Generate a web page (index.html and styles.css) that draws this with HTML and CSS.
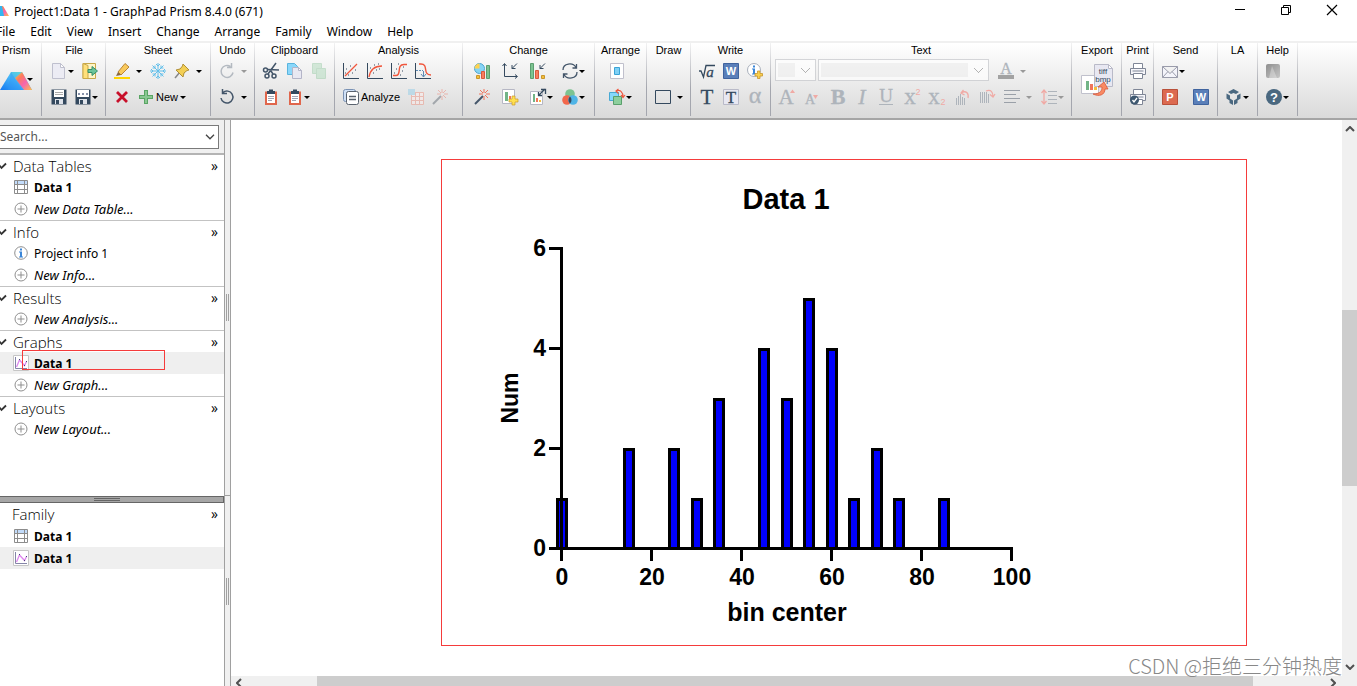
FILE: index.html
```html
<!DOCTYPE html>
<html lang="en">
<head>
  <meta charset="UTF-8">
  <meta name="viewport" content="width=device-width, initial-scale=1.0">
  <title>Project1:Data 1 - GraphPad Prism 8.4.0 (671)</title>
  <link rel="stylesheet" href="styles.css">
</head>
<body>
  <!-- Shared icons -->
  <svg class="sprite" aria-hidden="true">
    <defs>
      <linearGradient id="gradBlue" x1="0" y1="1" x2="1" y2="0">
        <stop offset="0" stop-color="#1479f0"/><stop offset=".5" stop-color="#45b4f8"/><stop offset="1" stop-color="#6be8c8"/>
      </linearGradient>
      <linearGradient id="gradWarm" x1="0" y1="0" x2="1" y2="1">
        <stop offset="0" stop-color="#c8e070"/><stop offset=".3" stop-color="#ff7a5a"/><stop offset=".6" stop-color="#f565b0"/><stop offset="1" stop-color="#ffc04a"/>
      </linearGradient>
      <linearGradient id="gradGray" x1="0" y1="0" x2="1" y2="1">
        <stop offset="0" stop-color="#8e8e8e"/><stop offset="1" stop-color="#c6c6c6"/>
      </linearGradient>
    </defs>
    <symbol id="logo" viewBox="0 0 32 20">
      <path d="M11 1h11l10 18H0z" fill="url(#gradBlue)"/>
      <path d="M11 1l11 18H8z" fill="#2f95f5" opacity=".4"/>
      <path d="M22 1l10 18H24L15 7z" fill="url(#gradWarm)"/>
    </symbol>
    <symbol id="table" viewBox="0 0 14 14">
      <path d="M.5.5h13v13H.5z" fill="#fff"/><path d="M1 1h12v3H1z" fill="#c3dcfb"/>
      <path d="M.5.5h13v13H.5zM.5 4.500h13M.5 9.500h13M3.500.5v13M10.500.5v13" fill="none" stroke="#8c8c8c"/>
    </symbol>
    <symbol id="plus" viewBox="0 0 14 14">
      <circle cx="7" cy="7" r="6" fill="#fff" stroke="#8f8f8f"/><path d="M3.500 7h7M7 3.500v7" stroke="#8f8f8f" fill="none"/>
    </symbol>
    <symbol id="info" viewBox="0 0 14 14">
      <circle cx="7" cy="7" r="6.300" fill="#fff" stroke="#8f8f8f"/><path d="M6 2.500h2v2H6zM5 5.500h3v5h1v1H5v-1h1v-4H5z" fill="#3b86d8"/>
    </symbol>
    <symbol id="graph" viewBox="0 0 16 16">
      <path d="M.5.5h15v15H.5z" fill="#fff" stroke="#c6c6c6"/><path d="M2.500 2v11.500H14" fill="none" stroke="#8585a8"/>
      <path d="M3.500 12L6.500 5l5 5.500 2-4" fill="none" stroke="#dd88ee" stroke-width="1.300"/><path d="M6 4h1v1H6zM11 10h1v1h-1zM13 6h1v1h-1z" fill="#447"/>
    </symbol>
    <symbol id="check" viewBox="0 0 8 8"><path d="M0 3l2.500 3L7 1.500" fill="none" stroke="#333" stroke-width="1.800"/></symbol>
    <symbol id="down" viewBox="0 0 10 6"><path d="M1 .8l4 4 4-4" fill="none" stroke="currentColor" stroke-width="1.300"/></symbol>
    <symbol id="axes" viewBox="0 0 16 16"><path d="M.5 0v15.500H16" fill="none" stroke="#34495e"/></symbol>
    <symbol id="clip" viewBox="0 0 16 16">
      <path d="M3 3.500h10V15H3z" fill="#fff" stroke="#e0664c" stroke-width="2"/><path d="M4 2h2V.5h4V2h2v3H4z" fill="#34495e"/><path d="M5 7.500h6M5 9.500h6M5 11.500h4" stroke="#a0a4b4"/>
    </symbol>
    <symbol id="printer" viewBox="0 0 16 16">
      <path d="M3.500 6V.5h9V6" fill="#fff" stroke="#7f8696"/><path d="M.5 5.500h15v6H.5z" fill="#f6f6fa" stroke="#7f8696"/><path d="M2.500 8h11" stroke="#7f8696"/><path d="M3.500 10.500h9v5h-9z" fill="#fff" stroke="#7f8696"/>
    </symbol>
  </svg>

  <header class="titlebar">
    <svg class="app-icon" viewBox="0 0 9 12"><path d="M-2 11L0 1h3l6 10z" fill="url(#gradWarm)"/><path d="M-3 11L0 1h2l2 10z" fill="#33b5f0"/></svg>
    <h1>Project1:Data 1 - GraphPad Prism 8.4.0 (671)</h1>
    <div class="window-buttons">
      <button type="button" aria-label="Minimize"><svg viewBox="0 0 12 12"><path d="M1 5.500h10" stroke="#000"/></svg></button>
      <button type="button" aria-label="Restore"><svg viewBox="0 0 12 12"><path d="M1.500 3.500h7v7h-7zM3.500 3.500v-2h7v7h-2" fill="none" stroke="#000"/></svg></button>
      <button type="button" aria-label="Close"><svg viewBox="0 0 12 12"><path d="M1 1l10 10M11 1L1 11" stroke="#000" stroke-width="1.200"/></svg></button>
    </div>
  </header>

  <nav class="menubar">
    <a href="#">File</a><a href="#">Edit</a><a href="#">View</a><a href="#">Insert</a><a href="#">Change</a><a href="#">Arrange</a><a href="#">Family</a><a href="#">Window</a><a href="#">Help</a>
  </nav>

  <div class="toolbar">
    <section class="group g-prism">
      <h2>Prism</h2>
      <button type="button" class="tool logo" aria-label="Prism"><svg><use href="#logo"/></svg><i class="caret"></i></button>
    </section>

    <section class="group g-file">
      <h2>File</h2>
      <div class="row spread">
        <button type="button" class="tool" aria-label="New file"><svg viewBox="0 0 16 16"><path d="M1.500.5h8l4 4v11h-12z" fill="#ececf4" stroke="#bfc0ce"/><path d="M9.500.5v4h4z" fill="#fff" stroke="#bfc0ce"/></svg><i class="caret"></i></button>
        <button type="button" class="tool" aria-label="Open"><svg viewBox="0 0 16 16"><path d="M1 .5h12.500v15H1z" fill="#fff5c6" stroke="#c8a84a"/><path d="M1 .5l5 2v13H1z" fill="#ffe07a" stroke="#c8a84a"/><path d="M6 6.500h4V3.500L15.500 8 10 12.500v-3H6z" fill="#6cc49a" stroke="#34916a"/></svg></button>
      </div>
      <div class="row spread">
        <button type="button" class="tool" aria-label="Save"><svg viewBox="0 0 16 16"><path d="M.5.5h15v15h-15z" fill="#34495e"/><path d="M3 1h10v7H3z" fill="#fff"/><path d="M4 3.500h8M4 5.500h8" stroke="#aaa"/><path d="M4 10h8v5H4z" fill="#dfe3ea"/><path d="M5 11h3v4H5z" fill="#34495e"/></svg></button>
        <button type="button" class="tool" aria-label="Save as"><svg viewBox="0 0 16 16"><path d="M.5.5h15v15h-15z" fill="#34495e"/><path d="M2 1h12v7H2z" fill="#fff"/><path d="M3 4h2v2H3zM7 4h2v2H7zM11 4h2v2h-2z" fill="#8892aa"/><path d="M4 10h8v5H4z" fill="#dfe3ea"/><path d="M5 11h3v4H5z" fill="#34495e"/></svg><i class="caret"></i></button>
      </div>
    </section>

    <section class="group g-sheet">
      <h2>Sheet</h2>
      <div class="row">
        <button type="button" class="tool wide" aria-label="Highlight"><svg viewBox="0 0 16 16"><path d="M0 14h16v2H0z" fill="#ffd400"/><path d="M4 9l7-8.500 4 3.500-8 8z" fill="#f9c95c" stroke="#b98636"/><path d="M4 9l3 3-5 1z" fill="#8a6a42"/></svg><i class="caret"></i></button>
        <button type="button" class="tool" aria-label="Freeze"><svg viewBox="0 0 16 16" fill="none" stroke="#62bfea"><path d="M8 0v16M0 8h16M2.500 2.500l11 11M13.500 2.500l-11 11M6 1l2 2 2-2M6 15l2-2 2 2M1 6l2 2-2 2M15 6l-2 2 2 2M2.500 5H5V2.500M13.500 5H11V2.500M2.500 11H5v2.500M13.500 11H11v2.500"/></svg></button>
        <button type="button" class="tool wide" aria-label="Pin"><svg viewBox="0 0 16 16"><path d="M1 15l5-6" stroke="#888" stroke-width="1.500"/><path d="M9 1l6 6-2 .5-3 2.500-1 4-7-7 4-1 2.500-3z" fill="#f3cf55" stroke="#b08f35"/></svg><i class="caret"></i></button>
      </div>
      <div class="row">
        <button type="button" class="tool" aria-label="Delete"><svg viewBox="0 0 16 16"><path d="M3 3l10 10M13 3L3 13" stroke="#c8102a" stroke-width="2.800"/></svg></button>
        <button type="button" class="tool caption"><svg viewBox="0 0 16 16"><path d="M8 1v14M1 8h14" stroke="#5aa564" stroke-width="4"/><path d="M8 2v12M2 8h12" stroke="#8ac792" stroke-width="2"/></svg>New<i class="caret"></i></button>
      </div>
    </section>

    <section class="group g-undo">
      <h2>Undo</h2>
      <div class="row"><button type="button" class="tool wide off" aria-label="Redo"><svg viewBox="0 0 16 16" fill="none" stroke="#b4bac1" stroke-width="1.500"><path d="M11.500 3.500a6 6 0 1 0 2.500 6M12.500 0v4.500H8"/></svg><i class="caret"></i></button></div>
      <div class="row"><button type="button" class="tool wide" aria-label="Undo"><svg viewBox="0 0 16 16" fill="none" stroke="#44566a" stroke-width="1.500"><path d="M4 3.500A6 6 0 1 1 2 9M3.500 0v4.500H8"/></svg><i class="caret"></i></button></div>
    </section>

    <section class="group g-clip">
      <h2>Clipboard</h2>
      <div class="row">
        <button type="button" class="tool" aria-label="Cut"><svg viewBox="0 0 16 16" fill="none" stroke="#44566a" stroke-width="1.500"><path d="M5 11L13 0M4.500 6.500L16 7M8 8l2 3"/><circle cx="2.500" cy="7" r="2"/><circle cx="4" cy="13" r="2"/><circle cx="11" cy="13" r="2"/></svg></button>
        <button type="button" class="tool" aria-label="Copy"><svg viewBox="0 0 16 16"><path d="M.5.5h7l3 3v8H.5z" fill="#8ad7fb" stroke="#5ab4dd"/><path d="M5.500 4.500h6l3 3v8h-9z" fill="#e8e8f2" stroke="#b4b5c8"/><path d="M11.500 4.500v3h3z" fill="#fff" stroke="#b4b5c8"/></svg></button>
        <button type="button" class="tool faded" aria-label="Duplicate"><svg viewBox="0 0 16 16" fill="#a9d8b6" stroke="#8cc49b"><path d="M1.500.5h9v10h-9z"/><path d="M5.500 5.500h9v10h-9z"/></svg></button>
      </div>
      <div class="row">
        <button type="button" class="tool" aria-label="Paste"><svg><use href="#clip"/></svg></button>
        <button type="button" class="tool" aria-label="Paste special"><svg><use href="#clip"/></svg><i class="caret"></i></button>
      </div>
    </section>

    <section class="group g-analysis">
      <h2>Analysis</h2>
      <div class="row">
        <button type="button" class="tool" aria-label="Linear fit"><svg viewBox="0 0 16 16"><use href="#axes"/><path d="M2 13L14 1" stroke="#f0563c" stroke-width="1.300"/><path d="M3 6h1M7 3h1M9 10h1M12 7h1M5 12h1M2 10h1" stroke="#34495e"/></svg></button>
        <button type="button" class="tool" aria-label="Curve fit"><svg viewBox="0 0 16 16"><use href="#axes"/><path d="M2 14C3 8 7 3 15 3" stroke="#f0563c" fill="none" stroke-width="1.300"/><path d="M3 5h1M7 2h1M11 1h1M9 7h1M12 6h1M6 10h1" stroke="#34495e"/></svg></button>
        <button type="button" class="tool" aria-label="Sigmoidal fit"><svg viewBox="0 0 16 16"><use href="#axes"/><path d="M2 12.500h3c6 0 0-11 8-11h3" stroke="#f0563c" fill="none" stroke-width="1.400"/><path d="M3 10h1M5 6h1M7 1h1M12 4h1M11 8h1M9 12h1" stroke="#34495e"/></svg></button>
        <button type="button" class="tool" aria-label="Interpolate"><svg viewBox="0 0 16 16"><use href="#axes"/><path d="M4 1h2c8 0 1 11 10 11" stroke="#f0563c" fill="none" stroke-width="1.400"/><path d="M1 7.500h7" stroke="#5e8bb5" stroke-dasharray="2 1"/><path d="M8.500 8v6M6 11l2.500 3 2.500-3" fill="none" stroke="#5e8bb5"/></svg></button>
      </div>
      <div class="row">
        <button type="button" class="tool caption"><svg viewBox="0 0 16 16"><rect x=".5" y=".5" width="12" height="12" rx="2" fill="#cfe0f6" stroke="#7a92b4"/><rect x="3.500" y="2.500" width="12" height="13" rx="2" fill="#fff" stroke="#59626e"/><path d="M6 7.500h7M6 10.500h7" stroke="#59626e" stroke-width="1.500"/></svg>Analyze</button>
        <button type="button" class="tool faded" aria-label="Table"><svg viewBox="0 0 16 16"><path d="M3.500 3.500h12v12h-12zM7.500 3.500v12M11.500 3.500v12M3.500 7.500h12M3.500 11.500h12" fill="#fff0ee" stroke="#ee8a78"/><path d="M0 0h7v6H0z" fill="#8bcbe8"/></svg></button>
        <button type="button" class="tool faded" aria-label="Wizard"><svg viewBox="0 0 16 16"><path d="M1 15L9 7" stroke="#555f6b" stroke-width="2"/><path d="M10 0v4M10 7v4M5 5h4M12 5h4M6 1l3 3M11 6l3 3M14 1l-3 3" stroke="#ee7a68"/></svg></button>
      </div>
    </section>

    <section class="group g-change">
      <h2>Change</h2>
      <div class="row">
        <button type="button" class="tool" aria-label="Graph type"><svg viewBox="0 0 16 16"><circle cx="5.500" cy="5.500" r="5" fill="#86d4f5" stroke="#4da6d0"/><path d="M5.500 5.500H.5a5 5 0 0 1 5-5z" fill="#ffd250"/><path d="M12.500 2.500h3v13h-3z" fill="#7cc391" stroke="#5c9e70"/><path d="M7.500 8.500h3v7h-3z" fill="#f77f60" stroke="#d8583c"/><path d="M2.500 12.500h3v3h-3z" fill="#f4bf3c" stroke="#c8962c"/></svg></button>
        <button type="button" class="tool" aria-label="Format axes"><svg viewBox="0 0 16 16" fill="none" stroke="#34495e"><path d="M2.500 1v12.500H15M.5 3l2-2.500 2 2.500M13 11.500l2.500 2-2.500 2M15 .5L10 5.500M10 2v3.500h3.500"/></svg></button>
        <button type="button" class="tool" aria-label="Format graph"><svg viewBox="0 0 16 16"><path d="M.5.5h3v15h-3z" fill="#7cc391" stroke="#5c9e70"/><path d="M5.500 7.500h3v8h-3z" fill="#f77f60" stroke="#d8583c"/><path d="M11.500 12.500h3v3h-3z" fill="#f4bf3c" stroke="#c8962c"/><path d="M15 .5l-5 5M10 2v3.500h3.500" fill="none" stroke="#34495e"/></svg></button>
        <button type="button" class="tool" aria-label="Swap"><svg viewBox="0 0 16 16" fill="none" stroke="#44566a" stroke-width="1.300"><path d="M1 7c0-7 10-8 13-2.500M14.500 1v4h-4M15 9c0 7-10 8-13 2.500M1.500 15v-4h4"/></svg><i class="caret"></i></button>
      </div>
      <div class="row">
        <button type="button" class="tool" aria-label="Magic"><svg viewBox="0 0 16 16"><path d="M1 15L9 7" stroke="#44566a" stroke-width="2"/><path d="M10 0v4M10 7v4M5 5h4M12 5h4M6 1l3 3M11 6l3 3M14 1l-3 3" stroke="#f0755c"/></svg></button>
        <button type="button" class="tool" aria-label="Add data set"><svg viewBox="0 0 16 16"><path d="M.5.5h12v14H.5z" fill="#fff" stroke="#b6b7c4"/><path d="M3 3h3v9H3z" fill="#72b487"/><path d="M7 7h2v5H7z" fill="#f0755c"/><path d="M10 7h3v3h3v3h-3v3h-3v-3H7v-3h3z" fill="#ffe04f" stroke="#c89a2c" stroke-width=".7"/></svg></button>
        <button type="button" class="tool" aria-label="Resize"><svg viewBox="0 0 16 16"><path d="M.5 2.500h12v13H.5z" fill="#fff" stroke="#b6b7c4"/><path d="M3 5h2v8H3z" fill="#72b487"/><path d="M6 9h2v4H6z" fill="#f0755c"/><path d="M9 11h2v2H9z" fill="#f4bf3c"/><path d="M9 6l6-6M11 .5h4.500V5M8.500 3v3.500H12" fill="none" stroke="#34495e" stroke-width="1.300"/></svg><i class="caret"></i></button>
        <button type="button" class="tool" aria-label="Colors"><svg viewBox="0 0 16 16"><circle cx="8" cy="5" r="4.800" fill="#7cc391"/><circle cx="5" cy="11" r="4.800" fill="#f2674b"/><circle cx="11" cy="11" r="4.800" fill="#4fb4e6"/><path d="M8 7.500a4.800 4.800 0 0 1 0 7 4.800 4.800 0 0 1 0-7z" fill="#34495e"/></svg><i class="caret"></i></button>
      </div>
    </section>

    <section class="group g-arrange">
      <h2>Arrange</h2>
      <div class="row"><button type="button" class="tool" aria-label="Center"><svg viewBox="0 0 16 16"><path d="M1.500.5h13v15h-13z" fill="#fff" stroke="#c0c0cc"/><path d="M5.500 4.500h5v7h-5z" fill="#7fd0f5" stroke="#3ba3d6"/></svg></button></div>
      <div class="row"><button type="button" class="tool" aria-label="Rotate"><svg viewBox="0 0 16 16"><path d="M.5 3.500h9v8h-9z" fill="#86d8fb" stroke="#48a9d4"/><path d="M4.500 7.500h8v8h-8z" fill="#8dcf9d" stroke="#5aa06c"/><path d="M7 2c4-2 7 1 7 6M9.500 0L7 2l2.500 2.500M12 6l2 2.500L16 6" fill="none" stroke="#f0553c" stroke-width="1.200"/></svg><i class="caret"></i></button></div>
    </section>

    <section class="group g-draw">
      <h2>Draw</h2>
      <div class="row"></div>
      <div class="row"><button type="button" class="tool wide" aria-label="Rectangle"><svg viewBox="0 0 16 16"><path d="M.5 1.500h15v13H.5z" fill="none" stroke="#34495e"/></svg><i class="caret"></i></button></div>
    </section>

    <section class="group g-write">
      <h2>Write</h2>
      <div class="row">
        <button type="button" class="tool" aria-label="Equation"><svg viewBox="0 0 16 16"><path d="M0 8h2l2.500 6L7 2.500h9" fill="none" stroke="#34495e" stroke-width="1.300"/><text x="11" y="14" class="t-dark" font-size="15" font-style="italic">a</text></svg></button>
        <button type="button" class="tool" aria-label="Word object"><svg viewBox="0 0 16 16"><path d="M.5.5h15v15H.5z" fill="#5a7fb9" stroke="#3f639e"/><text x="8" y="12" class="t-white" font-size="11">W</text></svg></button>
        <button type="button" class="tool" aria-label="Info"><svg viewBox="0 0 16 16"><circle cx="7" cy="7" r="6.500" fill="#fff" stroke="#a9b0bc"/><path d="M6 2.500h2v2H6zM5 5.500h3v5h1v1H5v-1h1v-4H5z" fill="#3b86d8"/><path d="M10.500 8h2.500v2.500h2.500V13H13v2.500h-2.500V13H8v-2.500h2.500z" fill="#f8cf4c" stroke="#c8962c" stroke-width=".8"/></svg></button>
      </div>
      <div class="row">
        <button type="button" class="tool" aria-label="Text"><svg viewBox="0 0 16 16"><text x="8" y="15" class="t-dark" font-size="21">T</text></svg></button>
        <button type="button" class="tool" aria-label="Text box"><svg viewBox="0 0 16 16"><path d="M.5.5h15v15H.5z" fill="#e8e8f2" stroke="#b9bac8"/><text x="8" y="14" class="t-dark" font-size="17">T</text></svg></button>
        <button type="button" class="tool" aria-label="Greek"><svg viewBox="0 0 16 16"><text x="8" y="14" class="t-gray" font-size="24">α</text></svg></button>
      </div>
    </section>

    <section class="group g-text">
      <h2>Text</h2>
      <div class="row">
        <select class="size" disabled aria-label="Font size"><option></option></select>
        <select class="font" disabled aria-label="Font"><option></option></select>
        <button type="button" class="tool wide off" aria-label="Font color"><svg viewBox="0 0 16 16"><text x="8" y="11" class="t-gray" font-size="16">A</text><path d="M0 12h16v4H0z" fill="#a2a2a2"/></svg><i class="caret"></i></button>
      </div>
      <div class="row">
        <button type="button" class="tool" aria-label="Grow"><svg viewBox="0 0 16 16"><text x="7" y="15" class="t-gray" font-size="21">A</text><path d="M11 4l2.500-3.500L16 4z" fill="#f0aaa5"/></svg></button>
        <button type="button" class="tool" aria-label="Shrink"><svg viewBox="0 0 16 16"><text x="6" y="15" class="t-gray" font-size="14">A</text><path d="M9 6h5l-2.500 4z" fill="#f0aaa5"/></svg></button>
        <button type="button" class="tool" aria-label="Bold"><svg viewBox="0 0 16 16"><text x="9" y="15" class="t-gray" font-size="22" font-weight="bold">B</text></svg></button>
        <button type="button" class="tool" aria-label="Italic"><svg viewBox="0 0 16 16"><text x="8" y="15" class="t-gray" font-size="22" font-style="italic">I</text></svg></button>
        <button type="button" class="tool" aria-label="Underline"><svg viewBox="0 0 16 16"><text x="7" y="13" class="t-gray" font-size="19">U</text><path d="M0 15.500h14" stroke="#aeb4bb"/></svg></button>
        <button type="button" class="tool" aria-label="Superscript"><svg viewBox="0 0 16 16"><text x="6" y="15" class="t-gray" font-size="23">x</text><text x="14" y="6" class="t-pink" font-size="9">2</text></svg></button>
        <button type="button" class="tool" aria-label="Subscript"><svg viewBox="0 0 16 16"><text x="5" y="15" class="t-gray" font-size="23">x</text><text x="14" y="16" class="t-pink" font-size="9">2</text></svg></button>
        <button type="button" class="tool" aria-label="Rotate left"><svg viewBox="0 0 16 16" fill="none"><path d="M2.500 16v-7M4.500 16V7M6.500 16V5M8.500 16V8M10.500 16V9" stroke="#aeb4bb"/><path d="M7 4c5-3 8 0 7 5M9.500 1L7 4l3.500 2" stroke="#f0aaa5" stroke-width="1.300"/></svg></button>
        <button type="button" class="tool" aria-label="Rotate right"><svg viewBox="0 0 16 16" fill="none"><path d="M1.500 3v11M3.500 3v11M5.500 3v11M7.500 3v11M9.500 5v9" stroke="#aeb4bb"/><path d="M7 2c5-2 7 1 7 6M11 5.500l3 2.500 2-3" stroke="#f0aaa5" stroke-width="1.300"/></svg></button>
        <button type="button" class="tool wide off" aria-label="Align"><svg viewBox="0 0 16 16"><path d="M0 1.500h16M0 5.500h12M0 9.500h16M0 13.500h12" stroke="#9aa0a8"/></svg><i class="caret"></i></button>
        <button type="button" class="tool off" aria-label="Line spacing"><svg viewBox="0 0 16 16" fill="none"><path d="M7 2.500h9M7 6.500h9M7 10.500h9M7 14.500h9" stroke="#aeb4bb"/><path d="M3 1v14M.5 4L3 1l2.500 3M.5 12L3 15l2.500-3" stroke="#f0aaa5" stroke-width="1.300"/></svg><i class="caret"></i></button>
      </div>
    </section>

    <section class="group g-export">
      <h2>Export</h2>
      <button type="button" class="tool export" aria-label="Export"><svg viewBox="0 0 32 32"><path d="M.5 11.500h17v18H.5z" fill="#fff" stroke="#c0c1cc"/><path d="M5 17h3v9H5z" fill="#72b487"/><path d="M9 20h3v6H9z" fill="#f0755c"/><path d="M13 23h3v3h-3z" fill="#f4bf3c"/><path d="M13.500.5h14l4 4v18h-18z" fill="#e8e8f2" stroke="#b9bac8"/><path d="M27.500.5v4h4z" fill="#fff" stroke="#b9bac8"/><text x="22" y="10" class="t-tiny">tiff</text><text x="22" y="18" class="t-tiny">bmp</text><path d="M12 30c8 0 9-4 9-7h-4l6-5 4 7h-3c0 6-6 8-12 5z" fill="#f98a63" stroke="#d8583c" stroke-width=".8"/></svg></button>
    </section>

    <section class="group g-print">
      <h2>Print</h2>
      <div class="row"><button type="button" class="tool" aria-label="Print"><svg><use href="#printer"/></svg></button></div>
      <div class="row"><button type="button" class="tool" aria-label="Print preview"><svg viewBox="0 0 16 16"><use href="#printer"/><circle cx="4.500" cy="11" r="4.500" fill="#3e5870"/><path d="M2.500 11l1.500 2 3-4" fill="none" stroke="#fff" stroke-width="1.300"/></svg></button></div>
    </section>

    <section class="group g-send">
      <h2>Send</h2>
      <div class="row"><button type="button" class="tool" aria-label="Mail"><svg viewBox="0 0 16 16"><path d="M.5 3.500h15v11H.5zM.5 3.500l7.500 7 7.500-7M.5 14.500l5.500-6M15.500 14.500l-5.500-6" fill="#f4f4fa" stroke="#9a9cab"/></svg><i class="caret"></i></button></div>
      <div class="row spread">
        <button type="button" class="tool" aria-label="PowerPoint"><svg viewBox="0 0 16 16"><path d="M.5.5h15v15H.5z" fill="#dc6a50" stroke="#b9503a"/><text x="8" y="12" class="t-white" font-size="11">P</text></svg></button>
        <button type="button" class="tool" aria-label="Word"><svg viewBox="0 0 16 16"><path d="M.5.5h15v15H.5z" fill="#5a7fb9" stroke="#3f639e"/><text x="8" y="12" class="t-white" font-size="11">W</text></svg></button>
      </div>
    </section>

    <section class="group g-la">
      <h2>LA</h2>
      <div class="row"></div>
      <div class="row"><button type="button" class="tool" aria-label="LabArchives"><svg viewBox="0 0 16 16" fill="#4a6880"><path d="M7.500 0L13 3 10 5 7.500 4 5 5 2 3zM.5 4.500L4 6.500v3l3 2V16L3.500 14v-2.500l-3-2zM14.500 4.500L11 6.500v3l-3 2V16l3.500-2v-2.500l3-2z"/></svg><i class="caret"></i></button></div>
    </section>

    <section class="group g-help">
      <h2>Help</h2>
      <div class="row"><button type="button" class="tool" aria-label="Prism guide"><svg viewBox="0 0 16 16"><rect y="1" width="14" height="14" rx="2" fill="url(#gradGray)"/><path d="M6 3l5 12H3z" fill="#fff" opacity=".3"/></svg></button></div>
      <div class="row"><button type="button" class="tool" aria-label="Help"><svg viewBox="0 0 16 16"><circle cx="8" cy="8" r="8" fill="#4a6880"/><text x="8" y="13" class="t-white" font-size="13">?</text></svg><i class="caret"></i></button></div>
    </section>
  </div>

  <div class="workspace">
    <aside class="sidebar">
      <div class="search">
        <input type="text" aria-label="Search" placeholder="Search...">
        <button type="button" aria-label="Search options"><svg><use href="#down"/></svg></button>
      </div>

      <div class="tree">
        <section>
          <h3><svg><use href="#check"/></svg>Data Tables<span>»</span></h3>
          <a href="#" class="sheet"><svg><use href="#table"/></svg>Data 1</a>
          <a href="#" class="new"><svg><use href="#plus"/></svg>New Data Table...</a>
        </section>
        <section>
          <h3><svg><use href="#check"/></svg>Info<span>»</span></h3>
          <a href="#"><svg><use href="#info"/></svg>Project info 1</a>
          <a href="#" class="new"><svg><use href="#plus"/></svg>New Info...</a>
        </section>
        <section>
          <h3><svg><use href="#check"/></svg>Results<span>»</span></h3>
          <a href="#" class="new"><svg><use href="#plus"/></svg>New Analysis...</a>
        </section>
        <section>
          <h3><svg><use href="#check"/></svg>Graphs<span>»</span></h3>
          <a href="#" class="sheet selected marked"><svg><use href="#graph"/></svg>Data 1</a>
          <a href="#" class="new"><svg><use href="#plus"/></svg>New Graph...</a>
        </section>
        <section>
          <h3><svg><use href="#check"/></svg>Layouts<span>»</span></h3>
          <a href="#" class="new"><svg><use href="#plus"/></svg>New Layout...</a>
        </section>
      </div>

      <div class="splitter"></div>

      <section class="family">
        <h3>Family<span>»</span></h3>
        <a href="#" class="sheet"><svg><use href="#table"/></svg>Data 1</a>
        <a href="#" class="sheet selected"><svg><use href="#graph"/></svg>Data 1</a>
      </section>
    </aside>

    <div class="gutter"><div class="upper"><i></i></div><div class="lower"><i></i></div></div>

    <main class="view">
      <div class="canvas">
        <div class="frame">
          <svg class="chart" viewBox="442 160 804 485" preserveAspectRatio="xMinYMin meet" role="img" aria-label="Histogram of Num by bin center">
            <text x="786" y="209" class="chart-title">Data 1</text>

            <g class="bars">
              <path d="M557.500 548.500v-49h9v49z"/>
              <path d="M624.500 548.500v-99h9v99z"/>
              <path d="M669.500 548.500v-99h9v99z"/>
              <path d="M692.500 548.500v-49h9v49z"/>
              <path d="M714.500 548.500v-149h9v149z"/>
              <path d="M759.500 548.500v-199h9v199z"/>
              <path d="M782.500 548.500v-149h9v149z"/>
              <path d="M804.500 548.500v-249h9v249z"/>
              <path d="M827.500 548.500v-199h9v199z"/>
              <path d="M849.500 548.500v-49h9v49z"/>
              <path d="M872.500 548.500v-99h9v99z"/>
              <path d="M894.500 548.500v-49h9v49z"/>
              <path d="M939.500 548.500v-49h9v49z"/>
            </g>

            <path class="axis" d="M549 248.500h12.500V561M549 348.500h12M549 448.500h12M549 548.500h462.500V561M651.500 548v13M741.500 548v13M831.500 548v13M921.500 548v13"/>

            <g class="y-labels">
              <text x="546" y="256">6</text><text x="546" y="356">4</text><text x="546" y="456">2</text><text x="546" y="556">0</text>
            </g>
            <g class="x-labels">
              <text x="562" y="585">0</text><text x="652" y="585">20</text><text x="742" y="585">40</text><text x="832" y="585">60</text><text x="922" y="585">80</text><text x="1012" y="585">100</text>
            </g>
            <text x="787" y="621" class="x-title">bin center</text>
            <text transform="translate(518 398) rotate(-90)" class="y-title">Num</text>
          </svg>
        </div>
      </div>

      <div class="scroll-y">
        <svg viewBox="0 0 10 6"><path d="M1 5l4-4 4 4" /></svg>
        <div class="track"><div class="thumb"></div></div>
        <svg viewBox="0 0 10 6"><path d="M1 1l4 4 4-4" /></svg>
      </div>
      <div class="scroll-x">
        <svg viewBox="0 0 6 10"><path d="M5 1L1 5l4 4" /></svg>
        <div class="track"><div class="thumb"></div></div>
        <svg viewBox="0 0 6 10"><path d="M1 1l4 4-4 4" /></svg>
      </div>
      <div class="watermark">CSDN @拒绝三分钟热度</div>
    </main>
  </div>
</body>
</html>
```
FILE: styles.css
```css
*, *::after {
  box-sizing: border-box;
}
body {
  display: flex;
  flex-direction: column;
  height: 100vh;
  margin: 0;
  overflow: hidden;
  background: #fff;
  color: #000;
  font-family: "Noto Sans", "Open Sans", sans-serif;
  font-size: 12px;
}
h1, h2, h3 {
  margin: 0;
  font-weight: normal;
}
a {
  color: inherit;
  text-decoration: none;
}
button {
  padding: 0;
  border: none;
  background: none;
  color: inherit;
  font: inherit;
}
svg {
  display: block;
  flex: none;
}
.sprite {
  position: absolute;
  width: 0;
  height: 0;
}

/* Title and menu */
.titlebar {
  display: flex;
  flex: none;
  align-items: center;
  height: 22px;
}
.app-icon {
  width: 9px;
  height: 12px;
  margin-right: 5px;
}
.titlebar h1 {
  font-size: 12px;
}
.window-buttons {
  display: flex;
  margin-left: auto;
  padding: 0 2px 2px 0;
}
.window-buttons button {
  display: flex;
  justify-content: center;
  width: 46px;
}
.window-buttons svg {
  width: 12px;
  height: 12px;
}
.menubar {
  display: flex;
  flex: none;
  gap: 15px;
  align-items: center;
  height: 19px;
  margin-left: -4px;
}

/* Toolbar */
.toolbar {
  display: flex;
  flex: none;
  height: 79px;
  border-top: 2px solid #f0f0f0;
  border-bottom: 2px solid #a5a5a5;
  background: linear-gradient(#fff, #dadada);
}
.group {
  flex: none;
  padding: 0 8px;
  border-right: 1px solid;
  border-image: linear-gradient(#f4f4f4, #a4a6ae 60%, #a4a6ae 96%, transparent 96%) 1;
}
.group h2 {
  height: 15px;
  margin: 0 -8px;
  font: 11px/14px "Liberation Sans", Arial, sans-serif;
  text-align: center;
}
.row {
  display: flex;
  gap: 8px;
  align-items: center;
  height: 26px;
}
.row.spread {
  justify-content: space-between;
}
.tool {
  display: flex;
  flex: none;
  gap: 1px;
  align-items: center;
}
.tool svg {
  width: 16px;
  height: 16px;
  overflow: visible;
}
.tool.wide {
  gap: 6px;
}
.tool.faded {
  opacity: 0.45;
}
.tool.caption {
  gap: 2px;
  font: 11px/16px "Liberation Sans", Arial, sans-serif;
}
.caret {
  width: 6px;
  border: 3px solid transparent;
  border-top-color: #000;
  border-bottom: none;
}
.off .caret {
  border-top-color: #999;
}
.g-prism { width: 42px; padding: 0; }
.g-prism h2 { margin: 0 9px 0 0; }
.g-file { width: 64px; padding-left: 9px; }
.g-sheet { width: 105px; }
.g-undo { width: 44px; }
.g-clip { width: 80px; }
.g-analysis { width: 128px; }
.g-change { width: 132px; padding-left: 11px; }
.g-change h2 { margin-left: -11px; }
.g-change .row { display: grid; grid-template-columns: 28px 28px 32px auto; gap: 0; justify-content: start; }
.g-arrange { width: 52px; padding-left: 14px; }
.g-arrange h2 { margin-left: -14px; }
.g-draw { width: 44px; }
.g-write { width: 80px; }
.g-text { width: 301px; }
.g-text .row { gap: 9px; }
.g-export { width: 50px; padding-left: 9px; }
.g-print { width: 32px; }
.g-print h2 { white-space: nowrap; }
.g-send { width: 64px; }
.g-la { width: 40px; }
.g-help { width: 40px; }
.tool.logo {
  gap: 0;
  margin-top: 13px;
}
.logo svg {
  width: 32px;
  height: 20px;
}
.logo .caret {
  margin: -4px 0 0 -5px;
}
.tool.export {
  margin-top: 6px;
}
.export svg {
  width: 32px;
  height: 32px;
}
select {
  height: 22px;
  margin-bottom: 3px;
  border: 1px solid #c6c8cc;
  border-radius: 0;
  appearance: none;
  background:
    linear-gradient(45deg, transparent 42%, #999 42%, #999 58%, transparent 58%) right 9px top 8px / 5px 5px no-repeat,
    linear-gradient(-45deg, transparent 42%, #999 42%, #999 58%, transparent 58%) right 5px top 8px / 5px 5px no-repeat,
    linear-gradient(#f0f0f0, #f0f0f0) 2px 3px / calc(100% - 22px) 14px no-repeat,
    #fff;
}
select.size {
  width: 41px;
  margin-left: -4px;
}
select.font {
  width: 171px;
  margin-left: -7px;
}
.t-dark, .t-gray, .t-white, .t-tiny, .t-pink {
  text-anchor: middle;
}
.t-dark {
  fill: #34495e;
  stroke: #34495e;
  stroke-width: 0.3px;
  font-family: "Liberation Serif", serif;
}
.t-gray {
  fill: #aeb4bb;
  stroke: #aeb4bb;
  stroke-width: 0.3px;
  font-family: "Liberation Serif", serif;
}
.t-white {
  fill: #fff;
  font-family: "Liberation Sans", sans-serif;
  font-weight: bold;
}
.t-pink {
  fill: #f0aaa5;
  font-family: "Liberation Sans", sans-serif;
}
.t-tiny {
  fill: #34495e;
  font: 8px "Liberation Sans", sans-serif;
}

/* Navigator */
.workspace {
  display: flex;
  flex: 1;
  min-height: 0;
}
.sidebar {
  display: flex;
  flex: none;
  flex-direction: column;
  width: 224px;
}
.search {
  display: flex;
  flex: none;
  height: 35px;
  padding: 5px 5px 4px 0;
  border-bottom: 2px solid #b4b4b4;
  background: #f0f0f0;
}
.search input {
  flex: 1;
  min-width: 0;
  padding: 0 0 2px;
  border: 1px solid #7a7a7a;
  border-width: 1px 0;
  background: #fff;
  font: inherit;
}
.search input::placeholder {
  color: #555;
}
.search button {
  width: 14px;
  border: 1px solid #7a7a7a;
  border-left: none;
  background: #fff;
  color: #444;
}
.search svg {
  width: 10px;
  height: 6px;
}
.tree {
  flex: none;
  height: 341px;
}
.tree section {
  border-bottom: 1px solid #c3c3c3;
}
.tree section:last-child {
  border-bottom: none;
}
.sidebar h3 {
  display: flex;
  align-items: center;
  height: 21px;
  padding-right: 6px;
  font: 300 15px/20px "Open Sans", "Noto Sans", sans-serif;
}
.sidebar h3 svg {
  width: 8px;
  height: 8px;
  margin: 0 6px 0 -1px;
}
.sidebar h3 span {
  margin-left: auto;
  font-size: 14px;
  font-weight: 400;
}
.sidebar a {
  display: flex;
  align-items: center;
  height: 22px;
  padding-left: 14px;
}
.sidebar a svg {
  width: 14px;
  height: 14px;
  margin-right: 6px;
}
.sidebar a.sheet {
  font-weight: bold;
}
.sidebar a.new {
  font-size: 13px;
  font-style: italic;
}
.sidebar a.selected {
  padding-left: 13px;
  background: #efefef;
}
.sidebar a.selected svg {
  width: 16px;
  height: 16px;
  margin-right: 5px;
}
.sidebar a.marked {
  position: relative;
}
.marked::after {
  content: "";
  position: absolute;
  top: -2px;
  left: 22px;
  width: 143px;
  height: 20px;
  border: 1px solid #f53b3b;
}
.splitter {
  display: flex;
  flex: none;
  align-items: center;
  justify-content: center;
  height: 7px;
  border: 1px solid #666;
  border-left: none;
  background: #a6a6a6;
}
.splitter::after {
  content: "";
  width: 26px;
  height: 3px;
  margin-right: 10px;
  border: 1px solid #666;
  border-width: 1px 0;
}
.family h3 {
  height: 22px;
  padding-left: 12px;
}
.gutter {
  display: flex;
  flex: none;
  flex-direction: column;
  width: 7px;
  border: 1px solid #a0a0a0;
  border-width: 0 1px;
  background: #f0f0f0;
}
.gutter div {
  display: flex;
  align-items: center;
  justify-content: center;
}
.gutter .upper {
  height: 376px;
  border-bottom: 1px solid #a0a0a0;
}
.gutter .lower {
  flex: 1;
}
.gutter i {
  width: 3px;
  height: 27px;
  border: 1px solid #a0a0a0;
  border-width: 0 1px;
}

/* Graph sheet */
.view {
  position: relative;
  display: grid;
  flex: 1;
  grid-template-rows: 1fr 10px;
  grid-template-columns: 1fr 15px;
  min-width: 0;
}
.canvas {
  display: flex;
  min-height: 0;
  padding: 39px 95px 30px 210px;
}
.frame {
  flex: 1;
  min-width: 0;
  border: 1px solid #f53b3b;
}
.chart {
  width: 100%;
  height: 100%;
  font-family: "Liberation Sans", Arial, sans-serif;
  font-weight: bold;
}
.chart-title {
  font-size: 29px;
  text-anchor: middle;
}
.x-title {
  font-size: 25px;
  text-anchor: middle;
}
.x-labels, .y-labels, .y-title {
  font-size: 23px;
  text-anchor: middle;
}
.y-labels {
  text-anchor: end;
}
.bars path {
  fill: #00f;
  stroke: #000;
  stroke-width: 3px;
}
.axis {
  fill: none;
  stroke: #000;
  stroke-width: 3px;
}
.scroll-y, .scroll-x {
  display: flex;
  align-items: center;
  background: #f0f0f0;
}
.scroll-y {
  flex-direction: column;
  padding: 6px 0;
}
.scroll-x {
  grid-column: 1 / -1;
  padding: 0 21px 0 5px;
}
.scroll-y svg {
  width: 10px;
  height: 6px;
}
.scroll-x svg {
  width: 6px;
  height: 10px;
  margin-top: 4px;
}
.scroll-y path, .scroll-x path {
  fill: none;
  stroke: #505050;
  stroke-width: 2px;
}
.scroll-y .track {
  flex: 1;
  width: 100%;
}
.scroll-y .thumb {
  height: 33%;
  margin-top: 178px;
  background: #cdcdcd;
}
.scroll-x .track {
  flex: 1;
  height: 100%;
  padding: 0 77px 0 75px;
}
.scroll-x .thumb {
  height: 100%;
  background: #cdcdcd;
}
.watermark {
  position: absolute;
  right: 15px;
  bottom: 6px;
  color: #888;
  font: 300 20px/28px "Noto Sans CJK SC", sans-serif;
}
```
